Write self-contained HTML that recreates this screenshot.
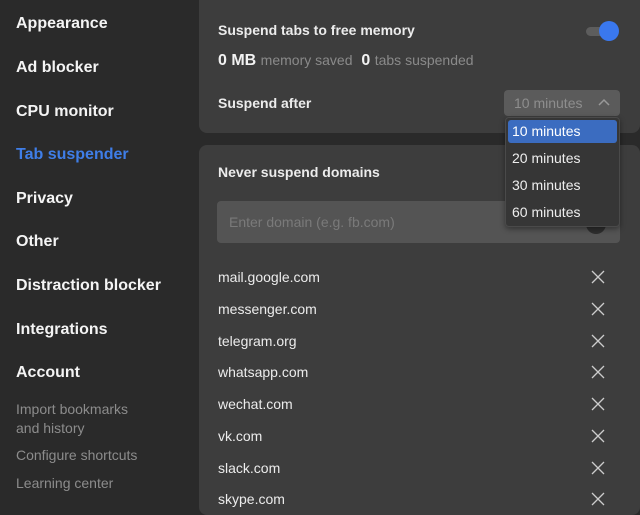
<!DOCTYPE html>
<html><head><style>
*{margin:0;padding:0;box-sizing:border-box}
body{width:640px;height:503px;overflow:hidden;background:#2a2a2a;font-family:"Liberation Sans",sans-serif;color:#f2f2f2;position:relative}
.a{position:absolute;white-space:nowrap}
.nav{left:16px;font-size:16px;font-weight:bold;color:#f4f4f4}
.sm{left:16px;font-size:14px;color:#8c8c8c}
.card{position:absolute;left:199px;width:441px;background:#3d3d3d;border-radius:8px}
.dom{left:218px;font-size:14px;color:#ececec}
.x{position:absolute;left:591px;width:14px;height:14px}
</style></head><body>
<div class="a nav" style="top:15px">Appearance</div>
<div class="a nav" style="top:59px">Ad blocker</div>
<div class="a nav" style="top:103px">CPU monitor</div>
<div class="a nav" style="top:146px;color:#3f7ee8">Tab suspender</div>
<div class="a nav" style="top:190px">Privacy</div>
<div class="a nav" style="top:233px">Other</div>
<div class="a nav" style="top:277px">Distraction blocker</div>
<div class="a nav" style="top:321px">Integrations</div>
<div class="a nav" style="top:364px">Account</div>
<div class="a sm" style="top:400px;line-height:19px">Import bookmarks<br>and history</div>
<div class="a sm" style="top:447px">Configure shortcuts</div>
<div class="a sm" style="top:475px">Learning center</div>

<div class="card" style="top:-8px;height:141px"></div>
<div class="card" style="top:145px;height:370px"></div>

<div class="a" style="left:218px;top:22px;font-size:14px;font-weight:bold;color:#ececec">Suspend tabs to free memory</div>
<div style="position:absolute;left:586px;top:27px;width:24px;height:9px;border-radius:5px;background:#5d5d5d"></div>
<div style="position:absolute;left:599px;top:21px;width:20px;height:20px;border-radius:50%;background:#3a78ee"></div>
<div class="a" style="left:218px;top:52px;font-size:16px;font-weight:bold">0 MB <span style="font-size:14px;font-weight:normal;color:#8a8a8a">memory saved</span>&nbsp; 0 <span style="font-size:14px;font-weight:normal;color:#8a8a8a">tabs suspended</span></div>
<div class="a" style="left:218px;top:95px;font-size:14px;font-weight:bold;color:#ececec">Suspend after</div>
<div style="position:absolute;left:504px;top:90px;width:116px;height:26px;border-radius:4px;background:#5b5b5b"></div>
<div class="a" style="left:514px;top:95px;font-size:14px;color:#8e8e8e">10 minutes</div>
<svg class="a" style="left:597px;top:97px" width="14" height="10"><path d="M2 8 L7 3 L12 8" stroke="#999" stroke-width="1.5" fill="none"/></svg>

<div class="a" style="left:218px;top:164px;font-size:14px;font-weight:bold;color:#ececec">Never suspend domains</div>
<div style="position:absolute;left:217px;top:201px;width:403px;height:42px;border-radius:4px;background:#545454"></div>
<div class="a" style="left:229px;top:214px;font-size:14px;color:#7a7a7a">Enter domain (e.g. fb.com)</div>
<div style="position:absolute;left:586px;top:214px;width:20px;height:20px;border-radius:50%;background:#2e2e2e"></div>

<div style="position:absolute;left:505px;top:117px;width:115px;height:110px;background:#363636;border:1px solid #4a4a4a;border-radius:4px;box-shadow:0 2px 6px rgba(0,0,0,.4)"></div>
<div style="position:absolute;left:508px;top:120px;width:109px;height:23px;border-radius:3px;background:#3b6cc0"></div>
<div class="a" style="left:512px;top:123px;font-size:14px;color:#fff">10 minutes</div>
<div class="a" style="left:512px;top:150px;font-size:14px;color:#eee">20 minutes</div>
<div class="a" style="left:512px;top:177px;font-size:14px;color:#eee">30 minutes</div>
<div class="a" style="left:512px;top:204px;font-size:14px;color:#eee">60 minutes</div>

<div class="a dom" style="top:269px">mail.google.com</div>
<div class="a dom" style="top:301px">messenger.com</div>
<div class="a dom" style="top:333px">telegram.org</div>
<div class="a dom" style="top:364px">whatsapp.com</div>
<div class="a dom" style="top:396px">wechat.com</div>
<div class="a dom" style="top:428px">vk.com</div>
<div class="a dom" style="top:460px">slack.com</div>
<div class="a dom" style="top:491px">skype.com</div>

<svg class="x" style="top:270px"><path d="M1 1L13 13M13 1L1 13" stroke="#ccc" stroke-width="1.3"/></svg>
<svg class="x" style="top:302px"><path d="M1 1L13 13M13 1L1 13" stroke="#ccc" stroke-width="1.3"/></svg>
<svg class="x" style="top:334px"><path d="M1 1L13 13M13 1L1 13" stroke="#ccc" stroke-width="1.3"/></svg>
<svg class="x" style="top:365px"><path d="M1 1L13 13M13 1L1 13" stroke="#ccc" stroke-width="1.3"/></svg>
<svg class="x" style="top:397px"><path d="M1 1L13 13M13 1L1 13" stroke="#ccc" stroke-width="1.3"/></svg>
<svg class="x" style="top:429px"><path d="M1 1L13 13M13 1L1 13" stroke="#ccc" stroke-width="1.3"/></svg>
<svg class="x" style="top:461px"><path d="M1 1L13 13M13 1L1 13" stroke="#ccc" stroke-width="1.3"/></svg>
<svg class="x" style="top:492px"><path d="M1 1L13 13M13 1L1 13" stroke="#ccc" stroke-width="1.3"/></svg>
</body></html>
